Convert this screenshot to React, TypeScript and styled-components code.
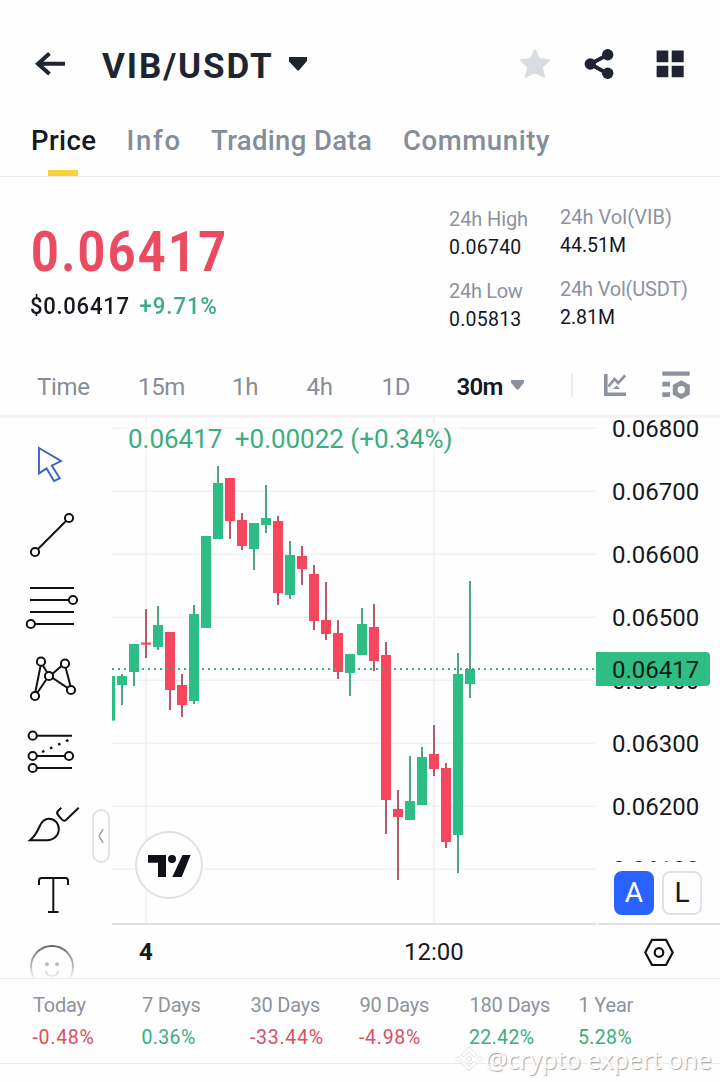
import React from 'react';
import styled, { createGlobalStyle, css } from 'styled-components';

const color = {
  ink: '#1e2530',
  text: '#15181e',
  muted: '#858d98',
  up: '#2ebd85',
  down: '#f6465d',
  upText: '#3bad80',
  downText: '#d8505f',
  upWick: '#4ca683',
  downWick: '#b65b6b',
  grid: '#f0f1f2',
  edge: '#dfe1e5',
  hairline: '#ebecee',
};

const GlobalStyle = createGlobalStyle`
  * { box-sizing: border-box; }
  body {
    margin: 0;
    background: #fefefe;
    color: ${color.text};
    font-family: Roboto, "Liberation Sans", sans-serif;
  }
  svg { display: block; flex: none; }
`;

const Page = styled.main`
  position: relative;
  width: 720px;
  height: 1082px;
  overflow: hidden;
  white-space: nowrap;
`;

/* ---------- header ---------- */

const Header = styled.header`
  display: flex;
  align-items: center;
  height: 104px;
  padding: 24px 36px 0 35px;
`;

const PairName = styled.h1`
  margin: 5px 15px 0 37px;
  color: ${color.ink};
  font-size: 35px;
  font-weight: 700;
  line-height: 40px;
  letter-spacing: 1.9px;
`;

const HeaderActions = styled.div`
  display: flex;
  align-items: center;
  margin-left: auto;
`;

const ActionButton = styled.span<{ $gap?: number }>`
  margin-left: ${(p) => p.$gap ?? 0}px;
`;

/* ---------- tabs ---------- */

const Tabs = styled.nav`
  display: grid;
  grid-template-columns: 95.5px 84.5px 192px auto;
  height: 73px;
  padding: 7px 0 0 31px;
  border-bottom: 1px solid ${color.hairline};
`;

const Tab = styled.div<{ $active?: boolean; $spacing: number }>`
  color: ${(p) => (p.$active ? color.text : color.muted)};
  font-size: 27.5px;
  font-weight: 500;
  line-height: 59px;
  letter-spacing: ${(p) => p.$spacing}px;
  ${(p) =>
    p.$active &&
    css`
      &::after {
        content: '';
        display: block;
        width: 30px;
        height: 6px;
        margin-left: 17px;
        background: #f8d33a;
      }
    `}
`;

/* ---------- price summary ---------- */

const Summary = styled.section`
  display: grid;
  grid-template-columns: 418px 111px auto;
  height: 181px;
  padding-left: 31px;
`;

const PriceColumn = styled.div`
  padding-top: 45px;
`;

const narrowFigures = css`
  transform-origin: left center;
`;

const LastPrice = styled.div`
  ${narrowFigures}
  transform: scaleX(0.88);
  color: #ea4b60;
  font-size: 55px;
  font-weight: 700;
  line-height: 60px;
  letter-spacing: 2.7px;
`;

const PriceDetail = styled.div`
  ${narrowFigures}
  transform: scaleX(0.94);
  display: flex;
  gap: 10.5px;
  margin: 9px 0 0 -1px;
  font-size: 23.5px;
  font-weight: 500;
  line-height: 30px;
  letter-spacing: 0.75px;
`;

const Change = styled.span`
  color: ${color.upText};
  letter-spacing: 1.05px;
`;

const StatColumn = styled.dl<{ $top: number }>`
  display: flex;
  flex-direction: column;
  gap: 15px;
  margin: 0;
  padding-top: ${(p) => p.$top}px;
`;

const StatLabel = styled.dt<{ $spacing: number }>`
  color: #8c939d;
  font-size: 20px;
  line-height: 28px;
  letter-spacing: ${(p) => p.$spacing}px;
`;

const StatValue = styled.dd<{ $spacing: number }>`
  margin: 1px 0 0;
  font-size: 19.5px;
  line-height: 28px;
  letter-spacing: ${(p) => p.$spacing}px;
`;

/* ---------- interval bar ---------- */

const IntervalBar = styled.div`
  display: grid;
  grid-template-columns: 101px 94px 74.5px 75px 75px 115px 32.5px 58px auto;
  align-items: center;
  height: 60px;
  padding-left: 37px;
  border-bottom: 3px solid #f4f4f6;
`;

const Interval = styled.span`
  color: ${color.muted};
  font-size: 24px;
  line-height: 30px;
  letter-spacing: -0.35px;
`;

const ActiveInterval = styled.span`
  display: flex;
  align-items: center;
  gap: 8px;
  font-size: 24px;
  font-weight: 600;
  line-height: 30px;
  letter-spacing: -0.7px;

  svg {
    margin-top: -3px;
  }
`;

const Divider = styled.span`
  width: 2px;
  height: 24px;
  margin: -3px 0 0 -1px;
  background: #eceef0;
`;

const BarIcon = styled.span`
  margin-top: -3px;
`;

/* ---------- chart ---------- */

const ChartPanel = styled.section`
  position: relative;
  display: grid;
  grid-template-columns: 112px 484px 124px;
  grid-template-rows: 505px 55px;
  height: 560px;
`;

const ToolRail = styled.aside`
  position: relative;
  grid-row: 1 / 3;
  height: 560px;
  padding-top: 9px;
  overflow: hidden;

  &::after {
    content: '';
    position: absolute;
    inset: auto 0 0 0;
    height: 36px;
    background: linear-gradient(rgba(254, 254, 254, 0.3), rgba(254, 254, 254, 0.95));
  }
`;

const Tool = styled.div`
  display: flex;
  align-items: center;
  height: 72px;
  padding-left: 24px;
`;

const RailHandle = styled.div`
  position: absolute;
  left: 92px;
  top: 391px;
  display: flex;
  align-items: center;
  justify-content: center;
  width: 18px;
  height: 54px;
  border: 2px solid #e0e2e8;
  border-radius: 9px;
  background: #fefefe;
`;

const PlotArea = styled.div`
  position: relative;
`;

const Legend = styled.div`
  position: absolute;
  left: 8px;
  top: 5px;
  display: flex;
  gap: 12.5px;
  padding: 0 8px;
  background: rgba(254, 254, 254, 0.6);
  color: ${color.upText};
  font-size: 26px;
  line-height: 32px;
  letter-spacing: -0.03px;
`;

const Brand = styled.div`
  position: absolute;
  left: 23px;
  top: 413px;
  display: flex;
  align-items: center;
  justify-content: center;
  width: 68px;
  height: 68px;
  padding-top: 2px;
  border: 2px solid #e0e1e6;
  border-radius: 50%;
  background: #fefefe;
`;

const PriceAxis = styled.div`
  position: relative;
`;

const AxisLabels = styled.div`
  height: 444px;
  padding-left: 16px;
  overflow: hidden;
`;

const AxisLabel = styled.div`
  font-size: 24px;
  line-height: 63px;

  &:first-child {
    margin-top: -20px;
  }
`;

const PriceTag = styled.div`
  position: absolute;
  left: 0;
  top: 234px;
  width: 114px;
  height: 34px;
  padding-left: 16px;
  border-radius: 0 4px 4px 0;
  background: ${color.up};
  color: #0b1a14;
  font-size: 24px;
  line-height: 36px;
`;

const ScaleButtons = styled.div`
  display: flex;
  gap: 8px;
  padding: 9px 0 0 18px;
`;

const ScaleButton = styled.button<{ $active?: boolean }>`
  width: 40px;
  height: 44px;
  padding: 0;
  border: 2px solid ${(p) => (p.$active ? '#2962ff' : '#e0e2e8')};
  border-radius: 8px;
  background: ${(p) => (p.$active ? '#2962ff' : '#fefefe')};
  color: ${(p) => (p.$active ? '#fff' : color.text)};
  font: 400 28px/40px Roboto, sans-serif;
`;

const TimeAxis = styled.div`
  display: grid;
  grid-template-columns: 265px auto;
  align-items: center;
  padding-left: 27px;
  border-top: 2px solid ${color.edge};
  font-size: 24px;
  line-height: 30px;
`;

const DayMark = styled.span`
  font-weight: 700;
`;

const AxisCorner = styled.div`
  display: flex;
  align-items: center;
  margin-left: 2px;
  padding-left: 46px;
  border-top: 2px solid ${color.edge};
`;

/* ---------- performance ---------- */

const Performance = styled.section`
  display: grid;
  grid-template-columns: 109px 108.5px 109px 110px 109px auto;
  height: 86px;
  padding: 10px 0 0 32.5px;
  border-top: 1px solid ${color.hairline};
  border-bottom: 1px solid ${color.hairline};
`;

const PeriodLabel = styled.div`
  padding-left: 0.5px;
  color: #8c939d;
  font-size: 20px;
  line-height: 32px;
  letter-spacing: -0.2px;
`;

const PeriodValue = styled.div<{ $down: boolean }>`
  margin-top: 1px;
  color: ${(p) => (p.$down ? color.downText : color.upText)};
  font-size: 19.5px;
  line-height: 32px;
  letter-spacing: ${(p) => (p.$down ? 0.72 : 0.35)}px;
`;

const Watermark = styled.div`
  position: absolute;
  left: 455px;
  top: 1043px;
  display: flex;
  align-items: center;
  gap: 2px;
  color: #fff;
  font: 400 25px/32px 'Noto Sans', sans-serif;
  letter-spacing: -0.22px;
  text-shadow: 1px 1px 1px rgba(70, 75, 80, 0.5);

  svg {
    filter: drop-shadow(0.8px 0.9px 0.4px rgba(70, 75, 80, 0.75));
  }
`;

/* ---------- data ---------- */

type Candle = [up: 0 | 1, high: number, top: number, bottom: number, low: number];

// One candle every 12px; the values are heights below the plot's top edge.
const candles: Candle[] = [
  [1, 258, 258, 302.7, 302.7],
  [1, 256, 258, 267, 287],
  [1, 226, 226, 254, 268],
  [0, 191, 224.5, 226.7, 240],
  [1, 188, 207, 229, 232],
  [0, 214, 214, 272, 292],
  [0, 256, 267, 287, 299],
  [1, 187, 196, 283, 286],
  [1, 118, 118, 210, 210],
  [1, 48, 65, 121, 121],
  [0, 60, 60, 103, 121],
  [0, 95, 102, 128, 132],
  [1, 105, 105, 131, 152],
  [1, 67, 100, 107, 115],
  [0, 98, 103, 175, 187],
  [1, 123, 137, 177, 181],
  [0, 128, 138, 151, 167],
  [0, 147, 156, 203, 212],
  [0, 164, 202, 216, 222],
  [0, 202, 215, 254, 261],
  [1, 236, 236, 255, 278],
  [1, 190, 206, 237, 237],
  [0, 186, 209, 243, 253],
  [0, 224, 237, 382, 416],
  [0, 372, 391, 399, 462],
  [1, 338, 383, 402, 402],
  [1, 329, 339, 387, 387],
  [0, 307, 336, 351, 358],
  [0, 345, 350, 424, 430],
  [1, 235, 256, 417, 455],
  [1, 163, 251, 266, 280],
];

const axisPrices = ['0.06800', '0.06700', '0.06600', '0.06500', '0.06400', '0.06300', '0.06200', '0.06100'];

const periods: [string, string][] = [
  ['Today', '-0.48%'],
  ['7 Days', '0.36%'],
  ['30 Days', '-33.44%'],
  ['90 Days', '-4.98%'],
  ['180 Days', '22.42%'],
  ['1 Year', '5.28%'],
];

/* ---------- drawings ---------- */

const toolShapes: React.ReactNode[] = [
  <path key="cursor" d="M15 13 37 26l-9.2 4.6 7.9 12.7L30 46l-7.4-12.6L15 38.4z" stroke="#3b62c6" strokeWidth="1.9" />,
  <g key="trend">
    <path d="M14 42 42 14" />
    <circle cx="11" cy="45" r="4.1" />
    <circle cx="45" cy="11" r="4.1" />
  </g>,
  <g key="fib">
    <path d="M6 9h44M6 21h38.7M6 33h44M11 45h39" />
    <circle cx="49" cy="21" r="4.1" />
    <circle cx="6.8" cy="45" r="4.1" />
  </g>,
  <g key="pattern">
    <path d="m16.6 14.8-5.2 26M18.8 14.5l4.3 6.7M22.5 28.3l-9 13.2M28.5 22.8l9-7.8M41.7 16.8l4.7 18M28.7 27l14.8 9.8" />
    <circle cx="17" cy="10.7" r="4.1" />
    <circle cx="41" cy="12.7" r="4.1" />
    <circle cx="25" cy="25" r="4.1" />
    <circle cx="47" cy="39" r="4.1" />
    <circle cx="11" cy="45" r="4.1" />
  </g>,
  <g key="forecast">
    <path d="M13 12.7h35M13 33h28M13 45h35" />
    <path d="m18 29 26.5-12" strokeDasharray="2.6 6.2" strokeWidth="2.4" />
    <circle cx="8.7" cy="12.7" r="4.1" />
    <circle cx="8.7" cy="33" r="4.1" />
    <circle cx="45" cy="33" r="4.1" />
    <circle cx="8.7" cy="45" r="4.1" />
  </g>,
  <path
    key="brush"
    d="M6 45.3c5-4.3 7.5-9 9.8-14.3 2-4.5 4.6-7.3 9-7.3 5.6 0 10 4.4 10 10.3 0 6.5-5 11.3-12 11.3zM37.3 12.7l-3.3 3.3q-1.8 2 0 4l4 4.6q2 2 4 .4l12.7-12.3"
  />,
  <path key="text" d="M15 18v-4.5q0-2.5 2.5-2.5h24q2.5 0 2.5 2.5V18M29.3 11v34M24 45h10.5" />,
  <g key="emoji">
    <circle cx="28" cy="28" r="21" />
    <circle cx="23" cy="25.2" r="1.9" fill="#111" stroke="none" />
    <circle cx="33" cy="25.2" r="1.9" fill="#111" stroke="none" />
    <path d="M21.8 32q1.5 5 6.2 5t6.2-5" />
  </g>,
];

const CandlePlot = () => (
  <svg width="484" height="505" viewBox="0 0 484 505">
    <g fill={color.grid}>
      {axisPrices.map((p, i) => (
        <rect key={p} x="0" y={9.5 + i * 63} width="483" height="1.5" />
      ))}
      <rect x="33.25" y="0" width="1.5" height="505" />
      <rect x="321.25" y="0" width="1.5" height="505" />
    </g>
    {candles.map(([up, high, top, bottom, low], i) => {
      const x = i * 12 - 2;
      return (
        <g key={i}>
          <rect x={x - 1} y={high} width="2" height={low - high} fill={up ? color.upWick : color.downWick} />
          <rect x={x - 5} y={top} width="10" height={bottom - top} fill={up ? color.up : color.down} />
        </g>
      );
    })}
    <path d="M0 251h484" stroke="#43a780" strokeWidth="2" strokeDasharray="2 4" />
  </svg>
);

export default function App() {
  return (
    <>
      <GlobalStyle />
      <Page>
        <Header>
          <svg width="30" height="24" viewBox="0 0 30 24" fill="none" stroke={color.ink} strokeWidth="4">
            <path d="M14.5 1.5 3 11.7l11.5 10.2M2.5 11.7H30" />
          </svg>
          <PairName>VIB/USDT</PairName>
          <svg width="18" height="14" viewBox="0 0 18 14" fill={color.ink}>
            <path d="M0 0h18v4L9.8 13.5H8.5L0 4.5z" />
          </svg>
          <HeaderActions>
            <ActionButton>
              <svg width="30" height="30" viewBox="0 0 30 30" fill="#d9dce1" stroke="#d9dce1" strokeWidth="2" strokeLinejoin="round">
                <path d="m15 1.2 4.2 8.9 9.8 1.2-7.2 6.6L24 28l-9-5-9 5 2.2-10.1L1 11.3l9.8-1.2z" />
              </svg>
            </ActionButton>
            <ActionButton $gap={34}>
              <svg width="30" height="30" viewBox="0 0 30 30" fill={color.ink}>
                <path d="M23.7 5.7 6.3 15l17.4 9.7" fill="none" stroke={color.ink} strokeWidth="4" />
                <circle cx="23.7" cy="5.7" r="5.7" />
                <circle cx="6.3" cy="15" r="5.7" />
                <circle cx="23.7" cy="24.3" r="5.7" />
              </svg>
            </ActionButton>
            <ActionButton $gap={42}>
              <svg width="28" height="28" viewBox="0 0 28 28" fill={color.ink}>
                <path d="M.6.6h11.7v11.7H.6zM15.7.6h12v11.7h-12zM.6 15.7h11.7v11.5H.6zM15.7 15.7h12v11.5h-12z" />
              </svg>
            </ActionButton>
          </HeaderActions>
        </Header>

        <Tabs>
          <Tab $active $spacing={0.4}>Price</Tab>
          <Tab $spacing={1.7}>Info</Tab>
          <Tab $spacing={0.35}>Trading Data</Tab>
          <Tab $spacing={0.6}>Community</Tab>
        </Tabs>

        <Summary>
          <PriceColumn>
            <LastPrice>0.06417</LastPrice>
            <PriceDetail>
              <span>$0.06417</span>
              <Change>+9.71%</Change>
            </PriceDetail>
          </PriceColumn>
          <StatColumn $top={28}>
            <div>
              <StatLabel $spacing={-0.1}>24h High</StatLabel>
              <StatValue $spacing={0.23}>0.06740</StatValue>
            </div>
            <div>
              <StatLabel $spacing={-0.3}>24h Low</StatLabel>
              <StatValue $spacing={0.23}>0.05813</StatValue>
            </div>
          </StatColumn>
          <StatColumn $top={26}>
            <div>
              <StatLabel $spacing={0.02}>24h Vol(VIB)</StatLabel>
              <StatValue $spacing={0}>44.51M</StatValue>
            </div>
            <div>
              <StatLabel $spacing={-0.2}>24h Vol(USDT)</StatLabel>
              <StatValue $spacing={0}>2.81M</StatValue>
            </div>
          </StatColumn>
        </Summary>

        <IntervalBar>
          <Interval>Time</Interval>
          <Interval>15m</Interval>
          <Interval>1h</Interval>
          <Interval>4h</Interval>
          <Interval>1D</Interval>
          <ActiveInterval>
            30m
            <svg width="13" height="10" viewBox="0 0 13 10" fill="#8b929e">
              <path d="M0 0h13v2.5L7.5 9.5h-2L0 2.5z" />
            </svg>
          </ActiveInterval>
          <Divider />
          <BarIcon>
            <svg width="22" height="22" viewBox="0 0 22 22" fill="none" stroke="#8b929e">
              <path d="M1.8 0v20.2H22" strokeWidth="3.6" />
              <path d="m4.5 12.5 6-7.500 3.700 4 7-7.500" strokeWidth="2.6" />
              <path d="m8.8 15 3.700-3.600 3.700 3.600z" fill="#8b929e" stroke="none" />
            </svg>
          </BarIcon>
          <BarIcon>
            <svg width="28" height="29" viewBox="0 0 28 29" fill="#8b929e">
              <path d="M.3.5h27.4v4.3H.3zM.3 10.8H8v4.700H.3zM.3 21.2H8V26H.3z" />
              <path d="m19.3 9.3 8.500 4.700v9.500l-8.500 4.700-8.500-4.700V14z" />
              <circle cx="19.3" cy="18.8" r="3.7" fill="#fefefe" />
            </svg>
          </BarIcon>
        </IntervalBar>

        <ChartPanel>
          <ToolRail>
            {toolShapes.map((shape, i) => (
              <Tool key={i}>
                <svg width="56" height="56" viewBox="0 0 56 56" fill="none" stroke="#111" strokeWidth="2">
                  {shape}
                </svg>
              </Tool>
            ))}
          </ToolRail>
          <PlotArea>
            <CandlePlot />
            <Legend>
              <span>0.06417</span>
              <span>+0.00022 (+0.34%)</span>
            </Legend>
            <Brand>
              <svg width="43" height="22" viewBox="0 0 43 22" fill="#0e1118">
                <path d="M0 0h18v22h-8V7.7H0zM34.5 0h8.2l-9 22h-9.400z" />
                <circle cx="24" cy="4" r="4" />
              </svg>
            </Brand>
          </PlotArea>
          <PriceAxis>
            <AxisLabels>
              {axisPrices.map((p) => (
                <AxisLabel key={p}>{p}</AxisLabel>
              ))}
            </AxisLabels>
            <PriceTag>0.06417</PriceTag>
            <ScaleButtons>
              <ScaleButton $active>A</ScaleButton>
              <ScaleButton>L</ScaleButton>
            </ScaleButtons>
          </PriceAxis>
          <TimeAxis>
            <DayMark>4</DayMark>
            <span>12:00</span>
          </TimeAxis>
          <AxisCorner>
            <svg width="30" height="28" viewBox="0 0 30 28" fill="none" stroke="#111" strokeWidth="2.2">
              <path d="M8 1.8h14L28.7 14.500 22 27H8L1.300 14.500z" />
              <circle cx="15" cy="14.5" r="4.3" />
            </svg>
          </AxisCorner>
          <RailHandle>
            <svg width="6" height="16" viewBox="0 0 6 16" fill="none" stroke="#9a9ca3" strokeWidth="1.5">
              <path d="M5 1 1.200 8 5 15" />
            </svg>
          </RailHandle>
        </ChartPanel>

        <Performance>
          {periods.map(([label, value]) => (
            <div key={label}>
              <PeriodLabel>{label}</PeriodLabel>
              <PeriodValue $down={value.startsWith('-')}>{value}</PeriodValue>
            </div>
          ))}
        </Performance>

        <Watermark>
          <svg width="28" height="26" viewBox="0 0 28 26" fill="#fff">
            <path d="M14 1 22 8.500 19.500 11 14 6 8.500 11 6 8.500zM14 25 6 17.500 8.500 15l5.500 5 5.500-5 2.500 2.500zM14 10l3 3-3 3-3-3zM3.500 10l3 3-3 3-3-3zM24.500 10l3 3-3 3-3-3z" />
          </svg>
          @crypto expert one
        </Watermark>
      </Page>
    </>
  );
}
